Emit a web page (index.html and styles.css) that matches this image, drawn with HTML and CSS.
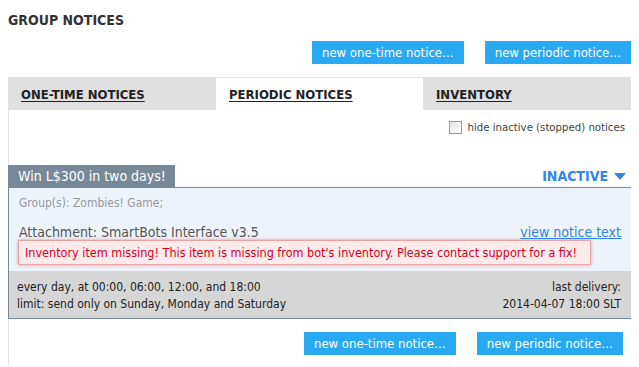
FILE: index.html
```html
<!DOCTYPE html>
<html lang="en">
<head>
  <meta charset="UTF-8" />
  <title>Group Notices</title>
  <link rel="stylesheet" href="styles.css">
</head>
<body>
  <h1 class="page-title">GROUP NOTICES</h1>

  <div class="actions actions-top">
    <button class="btn">new one-time notice…</button>
    <button class="btn">new periodic notice…</button>
  </div>

  <div class="tabs">
    <a class="tab" href="#">ONE-TIME NOTICES</a>
    <a class="tab active" href="#">PERIODIC NOTICES</a>
    <a class="tab" href="#">INVENTORY</a>
  </div>

  <div class="panel">
    <label class="hide-row">
      <span class="checkbox"></span>
      hide inactive (stopped) notices
    </label>

    <div class="notice">
      <div class="notice-head">
        <div class="notice-title">Win L$300 in two days!</div>
        <div class="notice-status">INACTIVE <span class="caret"></span></div>
      </div>
      <div class="notice-body">
        <div class="groups">Group(s): Zombies! Game;</div>
        <div class="attach-row">
          <span class="attachment">Attachment: SmartBots Interface v3.5</span>
          <a class="view-link" href="#">view notice text</a>
        </div>
        <div class="error">Inventory item missing! This item is missing from bot's inventory. Please contact support for a fix!</div>
      </div>
      <div class="notice-foot">
        <div class="schedule">
          every day, at 00:00, 06:00, 12:00, and 18:00<br>
          limit: send only on Sunday, Monday and Saturday
        </div>
        <div class="delivery">
          last delivery:<br>
          2014-04-07 18:00 SLT
        </div>
      </div>
    </div>

    <div class="actions actions-bottom">
      <button class="btn">new one-time notice…</button>
      <button class="btn">new periodic notice…</button>
    </div>
  </div>
</body>
</html>
```

FILE: styles.css
```css
:root {
  --blue: #29a9f2;
  --slate: #778899;
  --link: #2f86e8;
  --text: #333;
  --line: #e2e2e2;
}

body {
  margin: 8px;
  font-family: "DejaVu Sans Condensed", "DejaVu Sans", sans-serif;
  color: var(--text);
  background: #fff;
}

.page-title {
  font-size: 14px;
  font-weight: bold;
  margin: 3px 0 0;
  line-height: 18px;
}

.actions {
  display: flex;
  justify-content: flex-end;
  gap: 21px;
}

.actions-top {
  margin-top: 12px;
}

.actions-bottom {
  margin-top: 13px;
  padding: 0 8px 10px 0;
}

.btn {
  background: var(--blue);
  color: #fff;
  border: none;
  font-family: inherit;
  font-size: 13px;
  height: 23px;
  padding: 0 10px;
  cursor: pointer;
}

.tabs {
  display: grid;
  grid-template-columns: 208px 207px 1fr;
  margin-top: 13px;
}

.tab {
  background: #e0e0e0;
  color: #222;
  font-size: 13px;
  font-weight: bold;
  height: 33px;
  line-height: 35px;
  padding-left: 13px;
  text-decoration: underline;
  text-underline-offset: 2px;
}

.tab.active {
  background: #fff;
  border-top: 1px solid var(--line);
  height: 32px;
  line-height: 34px;
}

.panel {
  border-left: 1px solid var(--line);
  border-right: 1px solid var(--line);
  margin-right: -1px;
}

.hide-row {
  display: flex;
  justify-content: flex-end;
  align-items: center;
  gap: 6px;
  font-size: 11.3px;
  color: #444;
  padding: 8px 6px 0 0;
  height: 18px;
}

.checkbox {
  width: 11px;
  height: 11px;
  border: 1px solid #999;
  background: linear-gradient(135deg, #e4e4e4, #fdfdfd);
}

.notice {
  margin: 29px -1px 0 -1px;
}

.notice-head {
  display: flex;
  justify-content: space-between;
  align-items: flex-end;
}

.notice-title {
  background: var(--slate);
  color: #fff;
  font-size: 14px;
  height: 22px;
  line-height: 22px;
  padding: 0 9px 0 10px;
}

.notice-status {
  color: var(--link);
  font-size: 14px;
  font-weight: bold;
  display: flex;
  align-items: center;
  gap: 6px;
  padding: 0 6px 3px 0;
}

.caret {
  width: 0;
  height: 0;
  border-left: 6px solid transparent;
  border-right: 6px solid transparent;
  border-top: 7px solid var(--link);
}

.notice-body {
  background: #edf3fa;
  border: 1px solid var(--slate);
  border-bottom: none;
  padding: 8px 10px 6px;
}

.groups {
  font-size: 12px;
  color: #999;
}

.attach-row {
  display: flex;
  justify-content: space-between;
  margin-top: 14px;
  font-size: 14px;
}

.attachment {
  color: #555;
}

.view-link {
  color: var(--link);
}

.error {
  background: #fdeaea;
  border: 1px solid #e9a5a5;
  box-shadow: 0 0 3px rgba(200, 60, 60, 0.5);
  color: #d3001f;
  font-size: 12.5px;
  margin: 0 30px 0 -1px;
  padding: 4px 6px;
}

.notice-foot {
  background: #d6d6d6;
  border: 1px solid var(--slate);
  border-top: none;
  display: flex;
  justify-content: space-between;
  font-size: 12px;
  color: #222;
  line-height: 17px;
  padding: 8px 10px 5px 8px;
}

.delivery {
  text-align: right;
}
```
